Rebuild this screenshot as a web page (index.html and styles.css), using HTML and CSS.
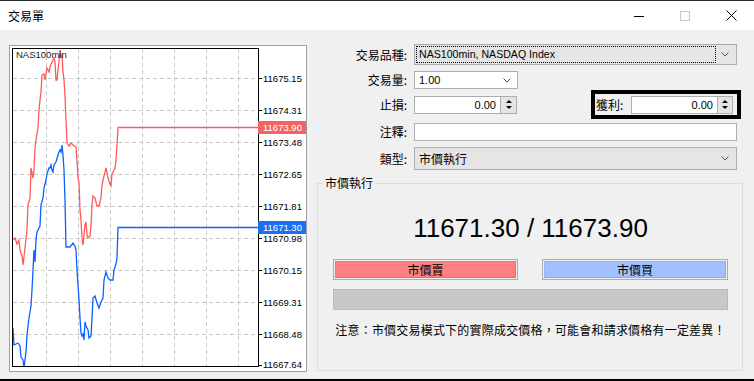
FILE: index.html
```html
<!DOCTYPE html>
<html lang="zh-Hant">

<head>
    <meta charset="UTF-8">
    <meta name="viewport" content="width=device-width, initial-scale=1.0">
    <title>交易單</title>
    <link rel="stylesheet" href="styles.css">
</head>

<body>
<div class="window">
    <div class="titlebar">
        <span class="title">交易單</span>
        <div class="controls">
            <span class="ctl"><svg width="10" height="10" viewBox="0 0 10 10"><line x1="0" y1="5.5" x2="10" y2="5.5" stroke="#000" stroke-width="1"/></svg></span>
            <span class="ctl"><svg width="10" height="10" viewBox="0 0 10 10"><rect x="0.5" y="0.5" width="9" height="9" fill="none" stroke="#c8c8c8" stroke-width="1"/></svg></span>
            <span class="ctl"><svg width="11" height="11" viewBox="0 0 11 11"><path d="M0.5 0.5 L10.5 10.5 M10.5 0.5 L0.5 10.5" stroke="#000" stroke-width="1"/></svg></span>
        </div>
    </div>

    <div class="content">
        <div class="chart">
            <svg width="298" height="327" viewBox="9 45 298 327">
                <rect x="9.5" y="45.5" width="297" height="326" fill="#fff" stroke="#a0a0a0"/>
                <line x1="8.5" y1="45" x2="8.5" y2="372" stroke="#bdbdbd"/>
                <rect x="12.5" y="48.5" width="246" height="318" fill="#fff" stroke="#000"/>
                <g stroke="#c8c8c8" stroke-dasharray="4 3" stroke-width="1">
                    <line x1="13" y1="78.5" x2="258" y2="78.5"/>
                    <line x1="13" y1="110.5" x2="258" y2="110.5"/>
                    <line x1="13" y1="142.5" x2="258" y2="142.5"/>
                    <line x1="13" y1="174.5" x2="258" y2="174.5"/>
                    <line x1="13" y1="206.5" x2="258" y2="206.5"/>
                    <line x1="13" y1="238.5" x2="258" y2="238.5"/>
                    <line x1="13" y1="270.5" x2="258" y2="270.5"/>
                    <line x1="13" y1="302.5" x2="258" y2="302.5"/>
                    <line x1="13" y1="334.5" x2="258" y2="334.5"/>
                    <line x1="46.5" y1="49" x2="46.5" y2="366"/>
                    <line x1="78.5" y1="49" x2="78.5" y2="366"/>
                    <line x1="110.5" y1="49" x2="110.5" y2="366"/>
                    <line x1="142.5" y1="49" x2="142.5" y2="366"/>
                    <line x1="174.5" y1="49" x2="174.5" y2="366"/>
                    <line x1="206.5" y1="49" x2="206.5" y2="366"/>
                    <line x1="238.5" y1="49" x2="238.5" y2="366"/>
                </g>
                <g stroke="#000" stroke-width="1">
                    <line x1="258" y1="78.5" x2="262" y2="78.5"/>
                    <line x1="258" y1="110.5" x2="262" y2="110.5"/>
                    <line x1="258" y1="142.5" x2="262" y2="142.5"/>
                    <line x1="258" y1="174.5" x2="262" y2="174.5"/>
                    <line x1="258" y1="206.5" x2="262" y2="206.5"/>
                    <line x1="258" y1="238.5" x2="262" y2="238.5"/>
                    <line x1="258" y1="270.5" x2="262" y2="270.5"/>
                    <line x1="258" y1="302.5" x2="262" y2="302.5"/>
                    <line x1="258" y1="334.5" x2="262" y2="334.5"/>
                    <line x1="258" y1="365.5" x2="262" y2="365.5"/>
                </g>
                <svg x="13" y="49" width="245" height="317" viewBox="13 49 245 317" overflow="hidden">
                    <polyline class="ask" points="13,240 15,238 17,244 19,240 20,250 22,256 23,265 25,248 27,230 28,205 30,198 31,168 33,178 34,170 35,148 36,140 38,128 39,110 40,100 41,92 42,75 44,74 45,80 47,68 49,72 50,67 52,62 54,58 55,62 56,80 57,80 58,70 59,62 60,50 61,58 62,55 63,72 64,80 65,96 66,120 67,143 69,146 71,143 74,146 76,147 77,160 78,178 79,182 80,210 81,220 82,238 83,245 84,235 85,225 86,222 87,235 88,238 90,236 91,226 92,205 93,196 95,198 97,206 99,206 101,198 102,185 104,176 106,168 107,172 108,178 110,184 111,186 112,174 114,170 115,168 116,160 117,145 118,127.5 258,127.5"/>
                    <polyline class="bid" points="13,328 14,345 16,344 18,343 20,346 21,357 23,360 24,368 25,360 26,352 27,335 29,318 31,306 32,290 33,270 34,250 35,262 36,240 37,232 39,228 40,226 41,205 43,198 44,188 46,180 47,174 49,168 50,168 51,165 52,170 53,172 54,165 56,162 58,155 59,152 60,150 61,152 62,145 63,155 64,170 65,200 66,247 70,247 73,243 75,246 76,250 77,270 78,285 79,300 80,318 81,333 82,336 83,334 84,340 85,322 86,326 88,330 89,338 91,336 92,318 93,298 95,296 97,303 99,308 101,302 103,298 104,280 106,272 108,278 110,280 113,280 114,270 116,264 117,258 118,227.5 258,227.5"/>
                </svg>
                <text class="sym" x="16" y="58">NAS100min</text>
                <g class="axis">
                    <text x="263" y="82">11675.15</text>
                    <text x="263" y="114">11674.31</text>
                    <text x="263" y="146">11673.48</text>
                    <text x="263" y="178">11672.65</text>
                    <text x="263" y="210">11671.81</text>
                    <text x="263" y="242">11670.98</text>
                    <text x="263" y="274">11670.15</text>
                    <text x="263" y="306">11669.31</text>
                    <text x="263" y="338">11668.48</text>
                    <text x="263" y="368">11667.64</text>
                </g>
                <rect x="258" y="121" width="48" height="13" fill="#f26464"/>
                <text class="tag" x="263" y="131">11673.90</text>
                <rect x="258" y="221" width="48" height="13" fill="#1c6ef2"/>
                <text class="tag" x="263" y="231">11671.30</text>
            </svg>
        </div>

        <div class="order">
            <div class="row r1">
                <label>交易品種:</label>
                <div class="combo gray wide">
                    <span class="focus">NAS100min, NASDAQ Index</span>
                    <svg class="chev" width="8" height="5" viewBox="0 0 8 5"><polyline points="0.5,0.5 4,4 7.5,0.5" fill="none" stroke="#555"/></svg>
                </div>
            </div>
            <div class="row r2">
                <label>交易量:</label>
                <div class="combo white vol">
                    <span class="val">1.00</span>
                    <svg class="chev" width="8" height="5" viewBox="0 0 8 5"><polyline points="0.5,0.5 4,4 7.5,0.5" fill="none" stroke="#555"/></svg>
                </div>
            </div>
            <div class="row r3">
                <label>止損:</label>
                <div class="cell">
                    <div class="spin">
                        <span class="num">0.00</span>
                        <span class="arrows"><i class="up"></i><i class="down"></i></span>
                    </div>
                    <div class="tp">
                        <span class="tp-label">獲利:</span>
                        <div class="spin">
                            <span class="num">0.00</span>
                            <span class="arrows"><i class="up"></i><i class="down"></i></span>
                        </div>
                    </div>
                </div>
            </div>
            <div class="row r4">
                <label>注釋:</label>
                <div class="text-input"></div>
            </div>
            <div class="row r5">
                <label>類型:</label>
                <div class="combo gray wide tall">
                    <span class="val">市價執行</span>
                    <svg class="chev" width="8" height="5" viewBox="0 0 8 5"><polyline points="0.5,0.5 4,4 7.5,0.5" fill="none" stroke="#555"/></svg>
                </div>
            </div>

            <div class="group">
                <span class="legend">市價執行</span>
                <div class="price">11671.30 / 11673.90</div>
                <div class="buttons">
                    <div class="btn sell"><span>市價賣</span></div>
                    <div class="btn buy"><span>市價買</span></div>
                </div>
                <div class="bar"></div>
                <p class="note">注意：市價交易模式下的實際成交價格，可能會和請求價格有一定差異！</p>
            </div>
        </div>
    </div>
</div>
</body>

</html>
```

FILE: styles.css
```css
body {
    margin: 0;
    background-color: #f0f0f0;
    font-family: "Liberation Sans", "Noto Sans CJK TC", sans-serif;
    font-size: 12px;
    color: #000;
}

.window {
    height: 381px;
    box-sizing: border-box;
    border-top: 1px solid #2b2b2b;
    border-bottom: 2px solid #000;
    display: flex;
    flex-direction: column;
}

.titlebar {
    height: 29px;
    background-color: #fff;
    display: flex;
    align-items: center;
    padding-left: 8px;
}

.title {
    flex: 1;
    font-family: "Noto Sans CJK TC", sans-serif;
    font-size: 12px;
}

.controls {
    display: flex;
    height: 29px;
}

.ctl {
    width: 46px;
    display: flex;
    align-items: center;
    justify-content: center;
}

.content {
    flex: 1;
    display: flex;
    gap: 10px;
    padding: 14px 0 0 9px;
}

.chart {
    margin-top: 1px;
    width: 298px;
    height: 327px;
}

.chart svg {
    display: block;
}

.ask, .bid {
    fill: none;
    stroke-width: 1.3;
    stroke-linejoin: miter;
}

.ask { stroke: #ff5a5a; }
.bid { stroke: #0a62ff; }

.sym {
    font-family: "Liberation Sans", sans-serif;
    font-size: 9.5px;
    fill: #1a1a1a;
}

.axis text, .tag {
    font-family: "Liberation Sans", sans-serif;
    font-size: 9.5px;
    fill: #000;
}

.tag { fill: #fff; }

.order {
    width: 426px;
}

.row {
    display: flex;
    align-items: center;
}

.row label {
    width: 90px;
    margin-right: 7px;
    text-align: right;
    font-family: "Noto Sans CJK TC", sans-serif;
    font-size: 12px;
    line-height: 16px;
}

.r2 { margin-top: 6px; }
.r3 { margin-top: 1px; }
.r4 { margin-top: 4px; }
.r5 { margin-top: 6px; }

.combo {
    box-sizing: border-box;
    border: 1px solid #adadad;
    display: flex;
    align-items: center;
    position: relative;
}

.combo.gray { background-color: #e5e5e5; }
.combo.white { background-color: #fff; }

.combo.wide {
    width: 323px;
    height: 21px;
}

.combo.tall { height: 23px; }

.combo.vol {
    width: 104px;
    height: 18px;
}

.focus {
    margin-left: 1px;
    width: 300px;
    height: 17px;
    box-sizing: border-box;
    border: 1px dotted #000;
    padding-left: 2px;
    font-size: 10.6px;
    line-height: 15px;
}

.val {
    padding-left: 4px;
    flex: 1;
    font-size: 11px;
    line-height: 16px;
}

.combo.tall .val {
    font-family: "Noto Sans CJK TC", sans-serif;
    font-size: 12px;
}

.chev {
    margin-left: auto;
    margin-right: 7px;
}

.combo.vol .chev { margin-right: 6px; }

.cell {
    width: 323px;
    display: flex;
    align-items: center;
}

.spin {
    display: flex;
    height: 18px;
}

.num {
    width: 87px;
    box-sizing: border-box;
    border: 1px solid #abadb3;
    background-color: #fff;
    text-align: right;
    padding-right: 4px;
    font-size: 11px;
    line-height: 16px;
}

.arrows {
    width: 16px;
    box-sizing: border-box;
    border: 1px solid #adadad;
    border-left: none;
    background-color: #e5e5e5;
    display: flex;
    flex-direction: column;
    align-items: center;
    justify-content: center;
    gap: 3px;
}

.arrows i {
    width: 0;
    height: 0;
    border-left: 3px solid transparent;
    border-right: 3px solid transparent;
}

.arrows .up { border-bottom: 3px solid #000; }
.arrows .down { border-top: 3px solid #000; }

.tp {
    margin-left: auto;
    margin-right: -4px;
    width: 150px;
    height: 29px;
    box-sizing: border-box;
    border: 4px solid #000;
    display: flex;
    align-items: center;
    padding-left: 1px;
}

.tp-label {
    width: 35px;
    font-family: "Noto Sans CJK TC", sans-serif;
    font-size: 12px;
}

.tp .num { width: 87px; }
.tp .arrows { width: 15px; }

.text-input {
    width: 323px;
    height: 18px;
    box-sizing: border-box;
    border: 1px solid #abadb3;
    background-color: #fff;
}

.group {
    position: relative;
    margin-top: 13px;
    height: 188px;
    box-sizing: border-box;
    border: 1px solid #dcdcdc;
    padding: 0 14px 0 15px;
}

.legend {
    position: absolute;
    top: -9px;
    left: 5px;
    padding: 0 2px;
    background-color: #f0f0f0;
    font-family: "Noto Sans CJK TC", sans-serif;
    line-height: 16px;
}

.price {
    margin-top: 29px;
    text-align: center;
    font-size: 26px;
    line-height: 30px;
}

.buttons {
    margin-top: 16px;
    display: flex;
    justify-content: space-between;
}

.btn {
    height: 21px;
    box-sizing: border-box;
    border: 1px solid #adadad;
    padding: 1px;
    display: flex;
}

.btn span {
    flex: 1;
    text-align: center;
    font-family: "Noto Sans CJK TC", sans-serif;
    font-size: 12px;
    line-height: 17px;
}

.sell { width: 185px; }
.buy { width: 186px; }

.sell span {
    background-color: #ff8080;
    box-shadow: inset -1px -1px 0 #e86a6a, inset 1px 1px 0 #f57878;
}

.buy span {
    background-color: #a0c0ff;
    box-shadow: inset -1px -1px 0 #86a8ee, inset 1px 1px 0 #94b6f8;
}

.bar {
    margin-top: 9px;
    height: 21px;
    box-sizing: border-box;
    border: 1px solid #bababa;
    background-color: #c8c8c8;
}

.note {
    margin: 12px 0 0 0;
    text-align: center;
    white-space: nowrap;
    font-family: "Noto Sans CJK TC", sans-serif;
    font-size: 12px;
    letter-spacing: 0.2px;
    line-height: 16px;
}
```
